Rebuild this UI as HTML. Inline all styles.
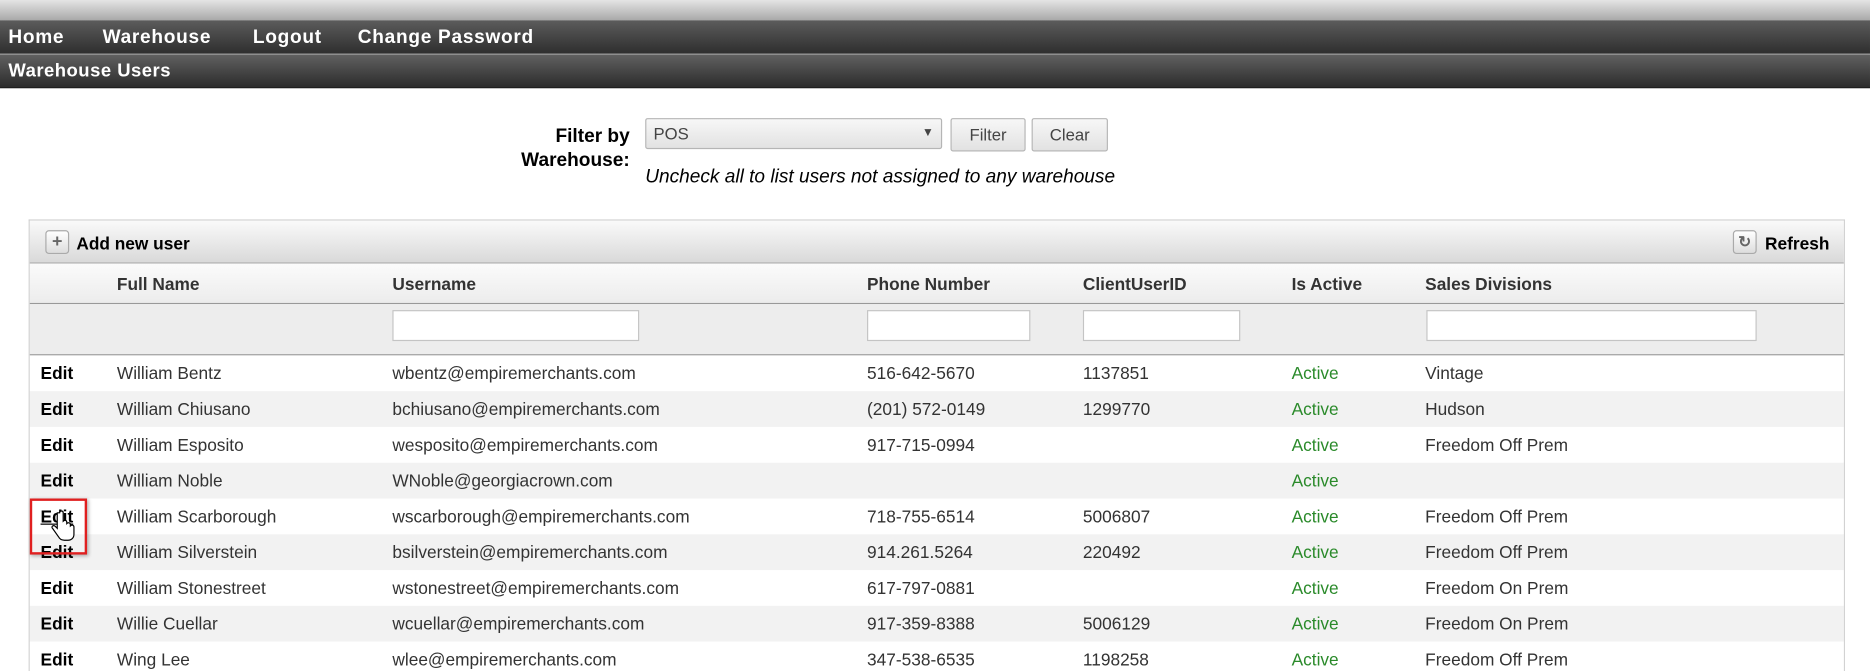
<!DOCTYPE html>
<html><head><meta charset="utf-8"><style>
html,body{margin:0;padding:0;background:#fff;overflow:hidden;width:1870px;height:671px}
#clip{position:relative;width:1870px;height:671px;overflow:hidden}
#w{position:absolute;left:0;top:0;width:1568px;height:563px;overflow:hidden;transform:scale(1.19260);transform-origin:0 0;font-family:"Liberation Sans",sans-serif}
.a{position:absolute;white-space:nowrap}
.top{position:absolute;left:0;top:0;width:1568px;height:17px;background:linear-gradient(#e4e4e4,#a9a9a9)}
.nav{position:absolute;left:0;top:17px;width:1568px;height:28px;background:linear-gradient(#5c5c5c,#2e2e2e);border-bottom:1px solid #888}
.sub{position:absolute;left:0;top:46px;width:1568px;height:27px;background:linear-gradient(#606060,#2c2c2c);border-bottom:1px solid #111}
.nt{color:#fff;font-weight:bold;font-size:16px;letter-spacing:0.6px;top:6px}
.st{color:#fff;font-weight:bold;font-size:15.5px;letter-spacing:0.4px;top:5px;left:7px}
.btn{position:absolute;top:99px;height:26px;border:1px solid #b5b5b5;border-radius:2px;background:linear-gradient(#f7f7f7,#e2e2e2);font-size:14px;color:#444;text-align:center;line-height:26px}
.grid{position:absolute;left:24px;top:184px;width:1521px;height:379px;border:1px solid #d0d0d0;border-bottom:none}
.tb{position:absolute;left:0;top:0;width:100%;height:35px;background:linear-gradient(#fafafa,#d9d9d9);border-bottom:1px solid #aaa}
.hd{position:absolute;left:0;top:36px;width:100%;height:33px;background:linear-gradient(#fbfbfb,#ececec);border-bottom:1px solid #999}
.fr{position:absolute;left:0;top:70px;width:100%;height:42px;background:#ededed;border-bottom:1px solid #999}
.inp{position:absolute;top:5px;height:26px;background:#fff;border:1px solid #c4c4c4;box-sizing:border-box}
.ht{font-weight:bold;font-size:14.5px;color:#333;top:10px}
.row{position:absolute;left:0;width:100%;height:30px;font-size:14.5px;color:#333}
.row span{position:absolute;top:8px;white-space:nowrap}
.row .e{font-weight:bold;color:#000;left:9px}
.g{color:#2a8a2a}
.ic{position:absolute;top:8px;width:18px;height:18px;border:1px solid #aaa;border-radius:3px;background:linear-gradient(#fff,#ddd);text-align:center;font-size:15px;line-height:18px;color:#666;font-weight:bold}
</style></head><body><div id="clip"><div id="w">
<div class="top"></div>
<div class="nav">
<span class="a nt" style="left:7px">Home</span>
<span class="a nt" style="left:86px">Warehouse</span>
<span class="a nt" style="left:212px">Logout</span>
<span class="a nt" style="left:300px">Change Password</span>
</div>
<div class="sub"><span class="a st">Warehouse Users</span></div>
<div class="a" style="left:420px;top:105px;width:108px;text-align:right;font-weight:bold;font-size:16px;line-height:20px;color:#000">Filter by<br>Warehouse:</div>
<div class="btn" style="left:541px;width:249px;text-align:left;padding-left:6px;box-sizing:border-box;line-height:24px">POS<span style="position:absolute;right:6px;top:0;font-size:10px">▼</span></div>
<div class="btn" style="left:797px;width:61px">Filter</div>
<div class="btn" style="left:865px;width:62px">Clear</div>
<div class="a" style="left:541px;top:140px;font-style:italic;font-size:16px;color:#000">Uncheck all to list users not assigned to any warehouse</div>
<div class="grid">
<div class="tb">
<div class="ic" style="left:13px">+</div>
<span class="a" style="left:39px;top:12px;font-weight:bold;font-size:14.5px;color:#000">Add new user</span>
<div class="ic" style="left:1428px;font-size:13px">↻</div>
<span class="a" style="left:1455px;top:12px;font-weight:bold;font-size:14.5px;color:#000">Refresh</span>
</div>
<div class="hd">
<span class="a ht" style="left:73px">Full Name</span>
<span class="a ht" style="left:304px">Username</span>
<span class="a ht" style="left:702px">Phone Number</span>
<span class="a ht" style="left:883px">ClientUserID</span>
<span class="a ht" style="left:1058px">Is Active</span>
<span class="a ht" style="left:1170px">Sales Divisions</span>
</div>
<div class="fr">
<div class="inp" style="left:304px;width:207px"></div>
<div class="inp" style="left:702px;width:137px"></div>
<div class="inp" style="left:883px;width:132px"></div>
<div class="inp" style="left:1171px;width:277px"></div>
</div>
<div class="row" style="top:113px;background:#fff"><span class="e">Edit</span><span style="left:73px">William Bentz</span><span style="left:304px">wbentz@empiremerchants.com</span><span style="left:702px">516-642-5670</span><span style="left:883px">1137851</span><span class="g" style="left:1058px">Active</span><span style="left:1170px">Vintage</span></div>
<div class="row" style="top:143px;background:#f2f2f2"><span class="e">Edit</span><span style="left:73px">William Chiusano</span><span style="left:304px">bchiusano@empiremerchants.com</span><span style="left:702px">(201) 572-0149</span><span style="left:883px">1299770</span><span class="g" style="left:1058px">Active</span><span style="left:1170px">Hudson</span></div>
<div class="row" style="top:173px;background:#fff"><span class="e">Edit</span><span style="left:73px">William Esposito</span><span style="left:304px">wesposito@empiremerchants.com</span><span style="left:702px">917-715-0994</span><span class="g" style="left:1058px">Active</span><span style="left:1170px">Freedom Off Prem</span></div>
<div class="row" style="top:203px;background:#f2f2f2"><span class="e">Edit</span><span style="left:73px">William Noble</span><span style="left:304px">WNoble@georgiacrown.com</span><span class="g" style="left:1058px">Active</span></div>
<div class="row" style="top:233px;background:#fff"><span class="e" style="text-decoration:underline">Edit</span><span style="left:73px">William Scarborough</span><span style="left:304px">wscarborough@empiremerchants.com</span><span style="left:702px">718-755-6514</span><span style="left:883px">5006807</span><span class="g" style="left:1058px">Active</span><span style="left:1170px">Freedom Off Prem</span></div>
<div class="row" style="top:263px;background:#f2f2f2"><span class="e">Edit</span><span style="left:73px">William Silverstein</span><span style="left:304px">bsilverstein@empiremerchants.com</span><span style="left:702px">914.261.5264</span><span style="left:883px">220492</span><span class="g" style="left:1058px">Active</span><span style="left:1170px">Freedom Off Prem</span></div>
<div class="row" style="top:293px;background:#fff"><span class="e">Edit</span><span style="left:73px">William Stonestreet</span><span style="left:304px">wstonestreet@empiremerchants.com</span><span style="left:702px">617-797-0881</span><span class="g" style="left:1058px">Active</span><span style="left:1170px">Freedom On Prem</span></div>
<div class="row" style="top:323px;background:#f2f2f2"><span class="e">Edit</span><span style="left:73px">Willie Cuellar</span><span style="left:304px">wcuellar@empiremerchants.com</span><span style="left:702px">917-359-8388</span><span style="left:883px">5006129</span><span class="g" style="left:1058px">Active</span><span style="left:1170px">Freedom On Prem</span></div>
<div class="row" style="top:353px;background:#fff"><span class="e">Edit</span><span style="left:73px">Wing Lee</span><span style="left:304px">wlee@empiremerchants.com</span><span style="left:702px">347-538-6535</span><span style="left:883px">1198258</span><span class="g" style="left:1058px">Active</span><span style="left:1170px">Freedom Off Prem</span></div>
</div>
<div class="a" style="left:25px;top:418px;width:44px;height:43px;border:2px solid #e02020;box-shadow:1px 1px 3px rgba(0,0,0,.3)"></div>
<svg class="a" style="left:43px;top:428px" width="22" height="28" viewBox="0 0 22 28"><path d="M5 2 v13 l-2-2 c-2-1-3 1-2 2 l5 7 c1 2 3 3 5 3 h3 c3 0 5-2 5-5 v-6 c0-2-2-2-3-1 v-1 c0-2-2-2-3-1 v-1 c0-2-2-2-3-1 V2 c0-2-3-2-3 0 z" fill="#fff" stroke="#000" stroke-width="1"/></svg>
</div></div></body></html>
